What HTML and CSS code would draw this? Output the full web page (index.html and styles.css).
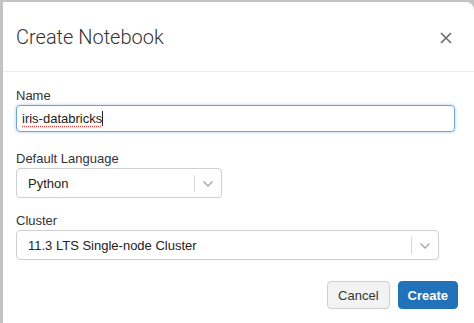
FILE: index.html
```html
<!DOCTYPE html>
<html lang="en">

<head>
  <meta charset="UTF-8">
  <meta name="viewport" content="width=device-width, initial-scale=1.0">
  <title>Create Notebook</title>
  <link rel="stylesheet" href="styles.css">
</head>

<body>
  <div class="modal">
    <div class="modal-header">
      <h1 class="modal-title">Create Notebook</h1>
      <span class="close">
        <svg width="12" height="12" viewBox="0 0 12 12"><path d="M1 1 L11 11 M11 1 L1 11" stroke="#6b6b6b" stroke-width="1.6"/></svg>
      </span>
    </div>
    <div class="modal-body">
      <label class="field-label">Name</label>
      <div class="text-input"><span class="typed">iris-databricks</span><span class="caret"></span></div>

      <label class="field-label">Default Language</label>
      <div class="select select-lang">
        <span class="select-value">Python</span>
        <span class="select-sep"></span>
        <span class="select-arrow">
          <svg width="12" height="8" viewBox="0 0 12 8"><path d="M1.5 1.5 L6 6 L10.5 1.5" fill="none" stroke="#a6a6a6" stroke-width="1.4"/></svg>
        </span>
      </div>

      <label class="field-label">Cluster</label>
      <div class="select select-cluster">
        <span class="select-value">11.3 LTS Single-node Cluster</span>
        <span class="select-sep"></span>
        <span class="select-arrow">
          <svg width="12" height="8" viewBox="0 0 12 8"><path d="M1.5 1.5 L6 6 L10.5 1.5" fill="none" stroke="#a6a6a6" stroke-width="1.4"/></svg>
        </span>
      </div>
    </div>
    <div class="modal-footer">
      <button class="btn btn-cancel">Cancel</button>
      <button class="btn btn-create">Create</button>
    </div>
  </div>
</body>

</html>
```

FILE: styles.css
```css
html,
body {
  height: 100%;
}

body {
  margin: 0;
  background: #c2c2c2;
  font-family: "Liberation Sans", Arial, sans-serif;
  color: #333;
  overflow: hidden;
}

.modal {
  margin: 2px 0 0 3px;
  height: calc(100% - 2px);
  background: #fff;
  border-top-right-radius: 8px;
}

.modal-header {
  display: flex;
  align-items: center;
  justify-content: space-between;
  height: 69px;
  padding: 0 22px 0 13px;
  border-bottom: 1px solid #ececec;
}

.modal-title {
  margin: 0;
  font-family: Roboto, "Liberation Sans", sans-serif;
  font-size: 20px;
  font-weight: 300;
  color: #333;
}

.close {
  display: flex;
  margin-top: 2px;
}

.modal-body {
  padding: 16px 16px 0 13px;
  display: flex;
  flex-direction: column;
  align-items: flex-start;
}

.field-label {
  font-size: 13px;
  line-height: 15px;
  color: #333;
  margin-bottom: 2px;
}

.text-input {
  box-sizing: border-box;
  width: 439px;
  height: 27px;
  border: 1px solid #6aa6dd;
  border-radius: 4px;
  box-shadow: 0 0 3px rgba(70, 140, 210, 0.5);
  display: flex;
  align-items: center;
  padding-left: 5px;
  font-size: 13px;
  color: #222;
  margin-bottom: 19px;
}

.typed {
  text-decoration: underline dotted #e04040;
  text-underline-offset: 3px;
}

.caret {
  width: 1px;
  height: 15px;
  background: #222;
}

.select {
  box-sizing: border-box;
  height: 30px;
  border: 1px solid #cfcfcf;
  border-radius: 4px;
  display: flex;
  align-items: center;
  font-size: 13px;
  color: #222;
}

.select-lang {
  width: 206px;
  margin-bottom: 15px;
}

.select-cluster {
  width: 423px;
}

.select-value {
  flex: 1;
  padding-left: 11px;
}

.select-sep {
  width: 1px;
  height: 17px;
  background: #d6d6d6;
}

.select-arrow {
  width: 26px;
  display: flex;
  justify-content: center;
  padding-top: 2px;
}

.modal-footer {
  display: flex;
  justify-content: flex-end;
  gap: 8px;
  padding: 21px 16px 0 0;
}

.btn {
  height: 28px;
  border-radius: 4px;
  font-family: "Liberation Sans", Arial, sans-serif;
  font-size: 13px;
  padding: 0 10px;
  cursor: pointer;
}

.btn-cancel {
  background: #f3f3f3;
  border: 1px solid #cfcfcf;
  color: #333;
}

.btn-create {
  background: #2272b9;
  border: 1px solid #2272b9;
  color: #fff;
  font-weight: bold;
  padding: 0 9px;
}
```
